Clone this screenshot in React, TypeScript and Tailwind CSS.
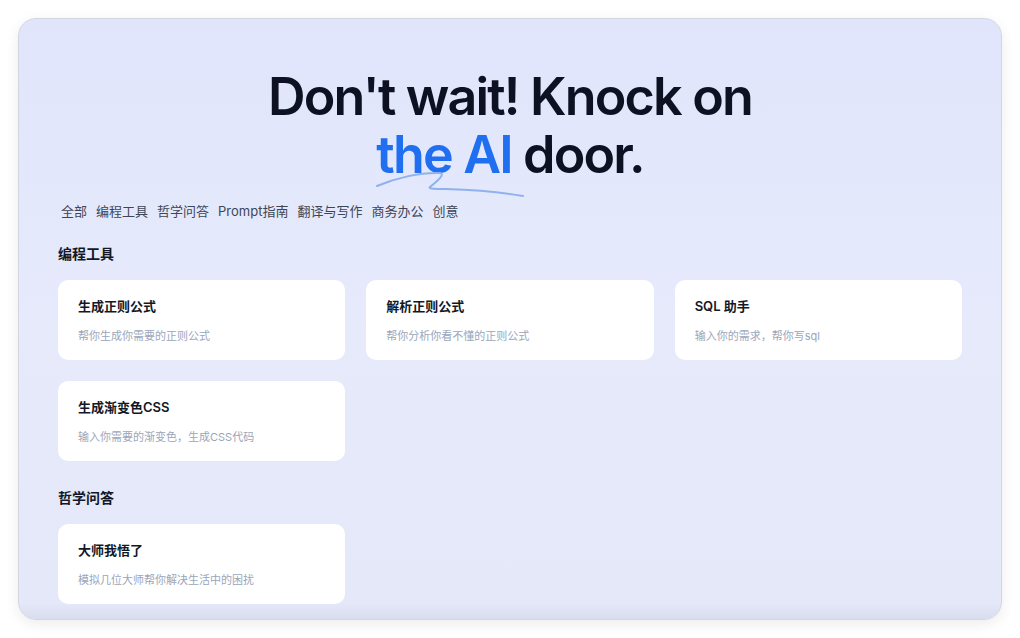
import React from "react";

const tabs = ["全部", "编程工具", "哲学问答", "Prompt指南", "翻译与写作", "商务办公", "创意"];

const sections = [
  {
    title: "编程工具",
    items: [
      { name: "生成正则公式", desc: "帮你生成你需要的正则公式" },
      { name: "解析正则公式", desc: "帮你分析你看不懂的正则公式" },
      { name: "SQL 助手", desc: "输入你的需求，帮你写sql" },
      { name: "生成渐变色CSS", desc: "输入你需要的渐变色，生成CSS代码" },
    ],
  },
  {
    title: "哲学问答",
    items: [{ name: "大师我悟了", desc: "模拟几位大师帮你解决生活中的困扰" }],
  },
];

function Card({ name, desc }: { name: string; desc: string }) {
  return (
    <div className="h-[80px] rounded-[10px] bg-white px-5 pt-[16px]">
      <div className="text-[13px] font-semibold leading-5 text-[#111827]">{name}</div>
      <div className="mt-[12px] text-[11px] leading-4 text-[#9aa6ba]">{desc}</div>
    </div>
  );
}

export default function App() {
  return (
    <div
      className="h-screen w-full bg-white p-[18px]"
      style={{ fontFamily: 'Inter, "Noto Sans CJK SC", sans-serif' }}
    >
      <div className="relative h-[602px] overflow-hidden rounded-[18px] border border-[#d3d6df] bg-gradient-to-b from-[#e0e5fc] via-[#e6eafb] to-[#e4e8f8] shadow-[0_4px_14px_rgba(0,0,0,0.08)]">
        <div className="px-[39px] pt-[49px]">
          {/* Hero */}
          <div className="relative text-center text-[52px] font-semibold leading-[58px] tracking-[-0.035em] text-[#0d1121]">
            <div>Don't wait! Knock on</div>
            <div>
              <span className="text-[#1f6ff0]">the AI</span> door.
            </div>
            <svg
              className="pointer-events-none absolute left-[318px] top-[102px]"
              width="150"
              height="30"
              viewBox="0 0 150 30"
              fill="none"
            >
              <path
                d="M1 16 C 20 8, 45 2, 64 3 C 70 4, 60 12, 54 17 C 52 19, 60 19, 70 19 C 100 20, 125 22, 147 26"
                stroke="#8fb1ee"
                strokeWidth="2"
                strokeLinecap="round"
              />
            </svg>
          </div>

          {/* Tabs */}
          <div className="mt-[17px] flex gap-[9px] pl-[3px] text-[13px] leading-5 text-[#3f4553]">
            {tabs.map((t) => (
              <span key={t}>{t}</span>
            ))}
          </div>

          {/* Sections */}
          {sections.map((s, i) => (
            <div key={s.title} className={i === 0 ? "mt-[23px]" : "mt-[27px]"}>
              <div className="text-[14px] font-bold leading-5 text-[#111827]">{s.title}</div>
              <div className="mt-[16px] grid grid-cols-3 gap-[21px]">
                {s.items.map((it) => (
                  <Card key={it.name} {...it} />
                ))}
              </div>
            </div>
          ))}
        </div>
        <div className="pointer-events-none absolute inset-x-0 bottom-0 h-[16px] bg-gradient-to-b from-transparent to-[#d9ddee]" />
      </div>
    </div>
  );
}
